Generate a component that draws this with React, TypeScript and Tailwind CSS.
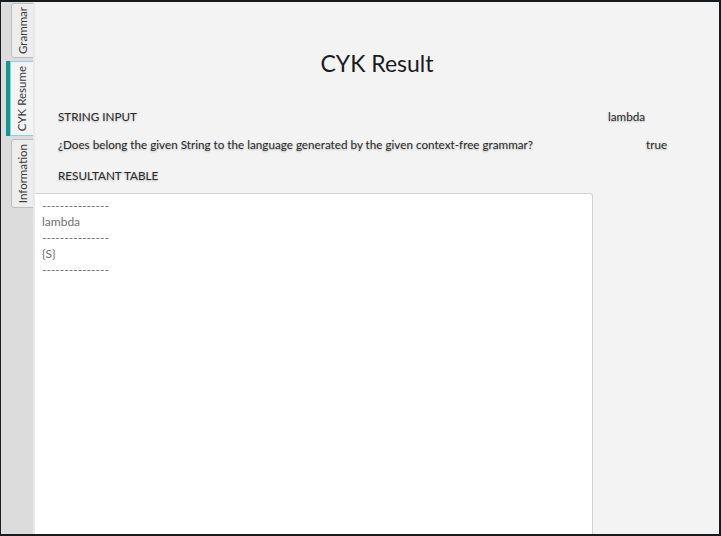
import React from "react";

const font = "font-['Lato','Liberation_Sans',sans-serif]";
const shadow = "[text-shadow:0_1px_2px_rgba(0,0,0,0.25)]";

function SideTab({ label, h, active }: { label: string; h: string; active?: boolean }) {
  if (active) {
    return (
      <div className={`flex ${h} ml-[5px]`}>
        <div className="w-[4px] bg-[#12988f]" />
        <div className="flex-1 flex items-center justify-center bg-[#f3f3f3] border-y border-l border-[#8fcde8]">
          <span className={`[writing-mode:vertical-rl] rotate-180 text-[11.5px] text-[#3a3a3a] ${font}`}>
            {label}
          </span>
        </div>
      </div>
    );
  }
  return (
    <div className={`flex items-center justify-center ${h} ml-[10px] w-[23px] bg-[#ededed] border border-[#bdbdbd] rounded-l-[3px]`}>
      <span className={`[writing-mode:vertical-rl] rotate-180 text-[11.5px] text-[#3a3a3a] ${font}`}>
        {label}
      </span>
    </div>
  );
}

export default function App() {
  const lines = ["---------------", "lambda", "---------------", "{S}", "---------------"];
  return (
    <div className="w-[721px] h-[536px] bg-[#151c21] pt-[2px] pl-[1px] pr-[2px] pb-[2px]">
      <div className="flex h-full">
        <div className="w-[32px] bg-[#dcdcdc] flex flex-col gap-[3px] pt-[1px]">
          <SideTab label="Grammar" h="h-[55px]" />
          <SideTab label="CYK Resume" h="h-[75px]" active />
          <SideTab label="Information" h="h-[69px]" />
        </div>
        <div className="w-[2px] bg-[#e8e8e8]" />
        <div className={`flex-1 flex flex-col bg-[#f3f3f3] ${font}`}>
          <div className="pt-[45px] h-[93px] text-center text-[23px] leading-[32px] text-[#1c1c1c]">
            CYK Result
          </div>
          <div className={`pl-[23px] text-[11.7px] leading-[16px] text-[#2a2a2a] ${shadow}`}>
            <div className="flex pt-[13px]">
              <div className="w-[550px]">STRING INPUT</div>
              <div>lambda</div>
            </div>
            <div className="flex pt-[12px]">
              <div className="w-[588px]">
                ¿Does belong the given String to the language generated by the given context-free grammar?
              </div>
              <div>true</div>
            </div>
            <div className="pt-[15px]">RESULTANT TABLE</div>
          </div>
          <div className="mt-[10px] flex-1 w-[558px] bg-white border-t border-r border-[#d2d2d2] rounded-tr-[3px] pt-[4px] pl-[7px] text-[12px] leading-[16px] text-[#707070]">
            {lines.map((l, i) => (
              <div key={i}>{l}</div>
            ))}
          </div>
        </div>
      </div>
    </div>
  );
}
